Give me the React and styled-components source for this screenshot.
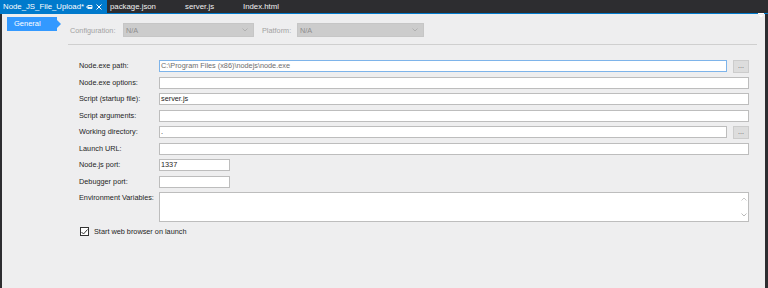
import React from 'react';
import styled, {createGlobalStyle} from "styled-components";

const Global = createGlobalStyle`
  html, body {
    margin: 0;
    padding: 0;
    background: #2d2d30;
  }
  * {
    box-sizing: border-box;
  }
`;

const Frame = styled.div`
  width: 768px;
  height: 288px;
  background: #2d2d30;
  display: flex;
  flex-direction: column;
  font-family: "Liberation Sans", Arial, sans-serif;
  overflow: hidden;
`;

const TabBar = styled.div`
  height: 13px;
  display: flex;
  align-items: stretch;
  border-bottom: 1px solid #007acc;
  box-sizing: content-box;
  position: relative;
`;

const Tab = styled.div`
  width: ${p => p.w}px;
  display: flex;
  align-items: center;
  padding: 0 3px;
  font-size: 7.8px;
  color: ${p => p.active ? "#ffffff" : "#f1f1f1"};
  background: ${p => p.active ? "#007acc" : "transparent"};
  white-space: nowrap;
`;

const TabName = styled.span`
  flex: 1;
`;

const TabIcon = styled.span`
  width: 11px;
  display: flex;
  justify-content: center;
  align-items: center;
`;

const Overflow = styled.div`
  position: absolute;
  right: 4px;
  top: 4px;
`;

const Body = styled.div`
  flex: 1;
  display: flex;
  margin: 0 3px 0 2px;
  background: #eeeeef;
  padding: 3px 0 0 5px;
`;

const NavItem = styled.div`
  position: relative;
  width: 50px;
  height: 14px;
  background: #3399ff;
  color: #ffffff;
  font-size: 7.5px;
  line-height: 14px;
  padding-left: 7px;

  &::after {
    content: "";
    position: absolute;
    right: -4px;
    top: 3px;
    border-left: 4px solid #3399ff;
    border-top: 4px solid transparent;
    border-bottom: 4px solid transparent;
  }
`;

const Main = styled.div`
  flex: 1;
  margin-left: 11px;
  margin-right: 8px;
  padding-top: 6px;
`;

const Toolbar = styled.div`
  display: flex;
  align-items: center;
  height: 14px;
  padding-left: 2px;
`;

const ToolLabel = styled.span`
  font-size: 7.3px;
  color: #a2a2a2;
  width: ${p => p.w}px;
  white-space: nowrap;
`;

const Combo = styled.div`
  width: ${p => p.w}px;
  height: 14px;
  background: #cccccc;
  border: 1px solid #c6c6c6;
  display: flex;
  align-items: center;
  justify-content: space-between;
  padding: 0 5px 0 2px;
  font-size: 7.3px;
  color: #8e8e8e;
  margin-right: ${p => p.mr || 0}px;
`;

const Rule = styled.div`
  height: 1px;
  background: #cfcfcf;
  margin-top: 7px;
`;

const Form = styled.div`
  display: grid;
  grid-template-columns: 80px 1fr;
  row-gap: 4.5px;
  padding: 15px 8px 0 11px;
  align-items: start;
`;

const Label = styled.div`
  font-size: 7.3px;
  color: #1e1e1e;
  line-height: 12px;
  height: 12px;
  white-space: nowrap;
`;

const Field = styled.div`
  display: flex;
  gap: 6px;
  height: ${p => p.h || 12}px;
`;

const Input = styled.div`
  flex: ${p => p.width ? "none" : 1};
  width: ${p => p.width ? p.width + "px" : "auto"};
  height: ${p => p.h || 12}px;
  background: #ffffff;
  border: 1px solid ${p => p.focus ? "#7eb4ea" : "#bdbdbd"};
  font-size: 7.3px;
  color: ${p => p.dim ? "#6d6d6d" : "#1e1e1e"};
  line-height: 10px;
  padding-left: 1px;
  position: relative;
  white-space: nowrap;
`;

const Browse = styled.div`
  width: 16px;
  height: 13px;
  flex: none;
  background: #dddddd;
  border: 1px solid #cccccc;
  font-size: 7px;
  color: #555;
  text-align: center;
  line-height: 9px;
`;

const Scroll = styled.div`
  position: absolute;
  right: 0;
  top: 0;
  bottom: 0;
  width: 9px;
  display: flex;
  flex-direction: column;
  justify-content: space-between;
  align-items: center;
  padding: 4px 0;
`;

const CheckRow = styled.div`
  display: flex;
  align-items: center;
  gap: 5px;
  padding-left: 12px;
  margin-top: 5px;
  font-size: 7.3px;
  color: #1e1e1e;
`;

const Box = styled.div`
  width: 9px;
  height: 9px;
  border: 1px solid #333;
  background: #fff;
  display: flex;
  align-items: center;
  justify-content: center;
`;

const Chevron = ({up}) => (
  <svg width="6" height="4" viewBox="0 0 6 4">
    <path d={up ? "M0.5 3.5 L3 1 L5.5 3.5" : "M0.5 0.5 L3 3 L5.5 0.5"} stroke={up ? "#bbbbbb" : "#a8a8a8"} fill="none" strokeWidth="0.8"/>
  </svg>
);

const rows = [
  {label: "Node.exe path:", value: "C:\\Program Files (x86)\\nodejs\\node.exe", browse: true, focus: true, dim: true},
  {label: "Node.exe options:", value: ""},
  {label: "Script (startup file):", value: "server.js"},
  {label: "Script arguments:", value: ""},
  {label: "Working directory:", value: ".", browse: true},
  {label: "Launch URL:", value: ""},
  {label: "Node.js port:", value: "1337", width: 71},
  {label: "Debugger port:", value: "", width: 71},
];

const App = () => {
  return (
    <Frame>
      <Global/>
      <TabBar>
        <Tab w={107} active>
          <TabName>Node_JS_File_Upload*</TabName>
          <TabIcon>
            <svg width="7" height="6" viewBox="0 0 7 6">
              <path d="M0 3 H2 M2 1 V5 M2 1.5 H6 V4.5 H2 M2 3.5 H6" stroke="#fff" strokeWidth="0.9" fill="none"/>
            </svg>
          </TabIcon>
          <TabIcon>
            <svg width="6" height="6" viewBox="0 0 6 6">
              <path d="M0.5 0.5 L5.5 5.5 M5.5 0.5 L0.5 5.5" stroke="#fff" strokeWidth="1"/>
            </svg>
          </TabIcon>
        </Tab>
        <Tab w={75}>package.json</Tab>
        <Tab w={58}>server.js</Tab>
        <Tab w={70}>Index.html</Tab>
        <Overflow>
          <svg width="6" height="5" viewBox="0 0 6 5">
            <path d="M0 0.5 H6" stroke="#fff" strokeWidth="1"/>
            <path d="M0.5 2 H5.5 L3 4.5 Z" fill="#fff"/>
          </svg>
        </Overflow>
      </TabBar>
      <Body>
        <div>
          <NavItem>General</NavItem>
        </div>
        <Main>
          <Toolbar>
            <ToolLabel w={53}>Configuration:</ToolLabel>
            <Combo w={131} mr={8}>N/A<Chevron/></Combo>
            <ToolLabel w={35}>Platform:</ToolLabel>
            <Combo w={127}>N/A<Chevron/></Combo>
          </Toolbar>
          <Rule/>
          <Form>
            {rows.map(r => (
              <React.Fragment key={r.label}>
                <Label>{r.label}</Label>
                <Field>
                  <Input focus={r.focus} dim={r.dim} width={r.width}>{r.value}</Input>
                  {r.browse && <Browse>...</Browse>}
                </Field>
              </React.Fragment>
            ))}
            <Label>Environment Variables:</Label>
            <Field h={30}>
              <Input h={30}>
                <Scroll>
                  <Chevron up/>
                  <Chevron/>
                </Scroll>
              </Input>
            </Field>
          </Form>
          <CheckRow>
            <Box>
              <svg width="7" height="6" viewBox="0 0 7 6">
                <path d="M0.5 3 L2.5 5 L6.5 0.5" stroke="#222" strokeWidth="0.9" fill="none"/>
              </svg>
            </Box>
            Start web browser on launch
          </CheckRow>
        </Main>
      </Body>
    </Frame>
  );
};

export default App;
